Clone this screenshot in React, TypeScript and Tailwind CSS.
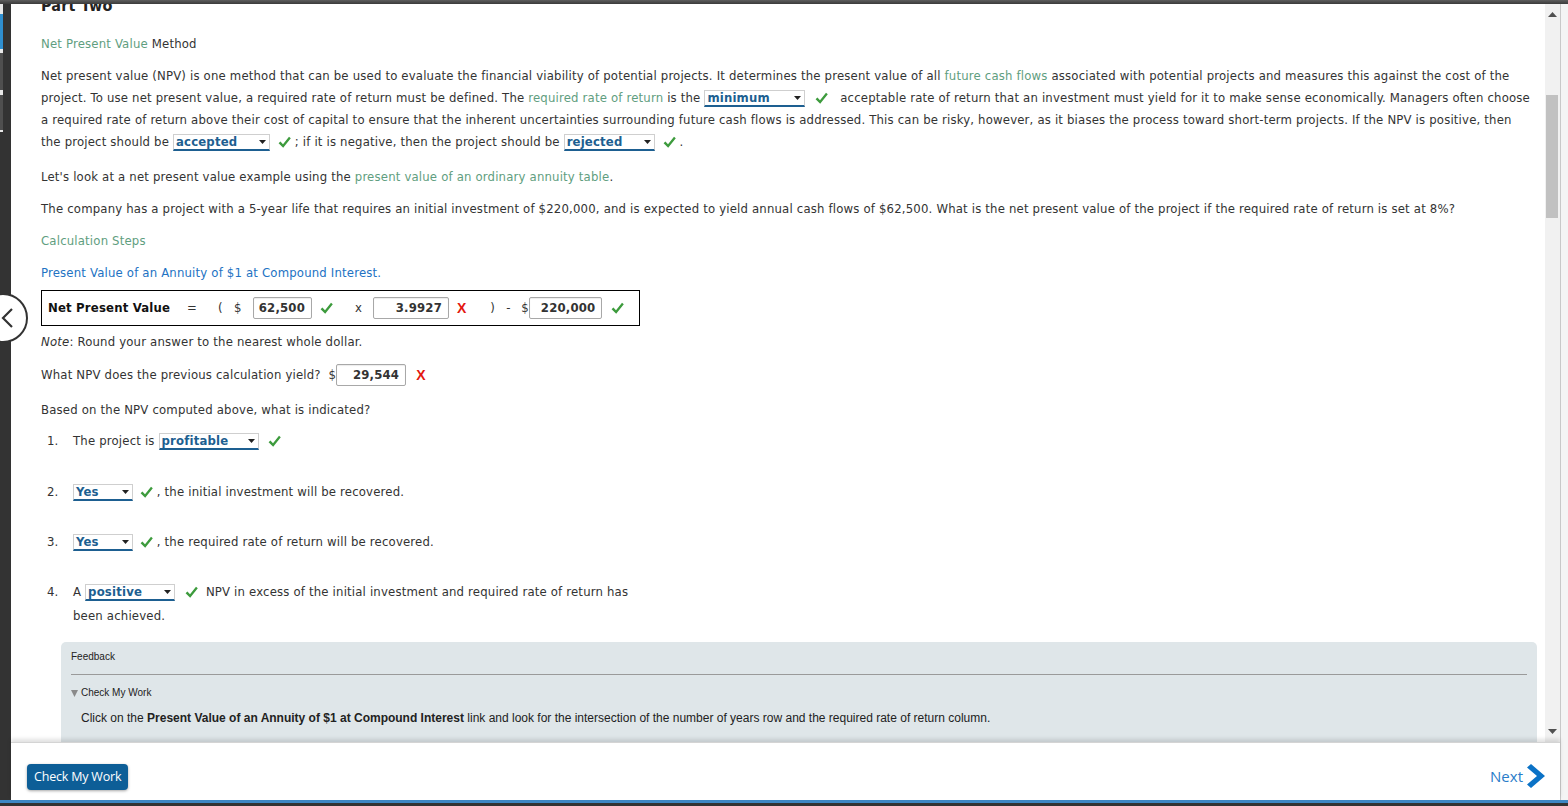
import React from "react";

const BODY_FONT = "font-['DejaVu_Sans_Condensed','DejaVu_Sans',sans-serif]";

function Arrow() {
  return (
    <svg width="7" height="4" viewBox="0 0 7 4" className="shrink-0">
      <path d="M0 0 H7 L3.5 4 Z" fill="#222" />
    </svg>
  );
}

function Select({ value, width }: { value: string; width: number }) {
  return (
    <span
      className="inline-flex h-[17px] items-center justify-between border border-[#cfcfcf] border-b-2 border-b-[#1d5f91] bg-white pl-[2px] pr-[3px] align-middle font-bold leading-[14px] text-[#1d5f91]"
      style={{ width }}
    >
      {value}
      <Arrow />
    </span>
  );
}

function Check({ className = "" }: { className?: string }) {
  return (
    <svg width="13" height="13" viewBox="0 0 13 13" className={`inline-block align-middle ${className}`}>
      <path d="M0.6 7.2 L2.4 5.6 L5 8.2 L11 0.8 L12.8 2.2 L5.2 11.8 Z" fill="#3d9b3d" />
    </svg>
  );
}

function Cross({ className = "" }: { className?: string }) {
  return (
    <span className={`inline-block align-middle font-['Liberation_Sans',sans-serif] text-[14px] font-bold leading-none tracking-normal text-[#e3170f] ${className}`}>
      X
    </span>
  );
}

function Field({ value, width }: { value: string; width: number }) {
  return (
    <span
      className="inline-flex h-[22px] items-center justify-end rounded-[2px] border border-[#a8a8a8] bg-white pr-[6px] align-middle font-bold text-[#333] shadow-[inset_0_1px_1px_rgba(0,0,0,0.08)]"
      style={{ width }}
    >
      {value}
    </span>
  );
}

function Green({ children }: { children: React.ReactNode }) {
  return <span className="text-[#5f9e80]">{children}</span>;
}

export default function App() {
  return (
    <div className="relative flex h-[806px] w-[1568px] flex-col overflow-hidden bg-white">
      {/* top strip */}
      <div className="h-[4px] shrink-0 bg-linear-to-b from-[#5e5e5e] to-[#3b3b3b]" />

      <div className="flex min-h-0 flex-1">
        {/* left rail */}
        <div className="flex w-[11px] shrink-0">
          <div className="flex w-[3px] flex-col bg-[#e8e8e8]">
            <div className="mt-[10px] h-[35px] bg-[#2f8fd0]" />
            <div className="mt-[4px] h-[37px] bg-[#4f4f4f]" />
            <div className="mt-[5px] h-[35px] bg-[#4f4f4f]" />
            <div className="mt-[2px] flex-1 bg-[#333]" />
          </div>
          <div className="flex-1 bg-[#333]" />
        </div>

        {/* main column */}
        <div className="flex min-w-0 flex-1 flex-col">
          <div className="flex min-h-0 flex-1">
            <div className={`min-w-0 flex-1 overflow-hidden pl-[30px] pr-[12px] text-[13px] tracking-[0.18px] text-[#333] ${BODY_FONT}`}>
              <h2 className="-mt-[8px] mb-[17px] text-[16px] font-bold leading-[20px] text-[#222]">Part Two</h2>

              <p className="mb-[10px] leading-[22px]">
                <Green>Net Present Value</Green> Method
              </p>

              <p className="mb-[13px] leading-[22px]">
                Net present value (NPV) is one method that can be used to evaluate the financial viability of potential projects. It
                determines the present value of all <Green>future cash flows</Green> associated with potential projects and measures this
                against the cost of the project. To use net present value, a required rate of return must be defined. The{" "}
                <Green>required rate of return</Green> is the <Select value="minimum" width={101} /> <Check className="ml-[6px] mr-[8px]" />{" "}
                acceptable rate of return that an investment must yield for it to make sense economically. Managers often choose a required
                rate of return above their cost of capital to ensure that the inherent uncertainties surrounding future cash flows is
                addressed. This can be risky, however, as it biases the process toward short-term projects. If the NPV is positive, then the
                project should be <Select value="accepted" width={97} /> <Check className="ml-[4px]" /> ; if it is negative, then the project
                should be <Select value="rejected" width={91} /> <Check className="ml-[4px]" /> .
              </p>

              <p className="mb-[10px] leading-[22px]">
                Let's look at a net present value example using the <Green>present value of an ordinary annuity table</Green>.
              </p>

              <p className="mb-[10px] leading-[22px]">
                The company has a project with a 5-year life that requires an initial investment of $220,000, and is expected to yield annual
                cash flows of $62,500. What is the net present value of the project if the required rate of return is set at 8%?
              </p>

              <p className="mb-[10px] leading-[22px]">
                <Green>Calculation Steps</Green>
              </p>

              <p className="mb-[6px] leading-[22px] text-[#2272c3]">Present Value of an Annuity of $1 at Compound Interest.</p>

              <div className="mb-[5px] flex h-[36px] w-[599px] items-center border border-black pl-[6px]">
                <span className="w-[139px] font-bold text-[#111]">Net Present Value</span>
                <span className="w-[31px]">=</span>
                <span className="w-[16px]">(</span>
                <span className="w-[19px]">$</span>
                <Field value="62,500" width={59} />
                <Check className="ml-[8px]" />
                <span className="ml-[22px] w-[18px]">x</span>
                <Field value="3.9927" width={76} />
                <Cross className="ml-[8px]" />
                <span className="ml-[24px] w-[16px]">)</span>
                <span className="w-[15px]">-</span>
                <span className="w-[8px]">$</span>
                <Field value="220,000" width={73} />
                <Check className="ml-[9px]" />
              </div>

              <p className="mb-[11px] leading-[22px]">
                <i>Note</i>: Round your answer to the nearest whole dollar.
              </p>

              <p className="mb-[13px] flex items-center leading-[22px]">
                What NPV does the previous calculation yield?&nbsp; $<Field value="29,544" width={70} />
                <Cross className="ml-[10px]" />
              </p>

              <p className="mb-[8px] leading-[22px]">Based on the NPV computed above, what is indicated?</p>

              <ol className="w-[620px]">
                <li className="mb-[27px] flex leading-[24px]">
                  <span className="w-[32px] shrink-0 pl-[6px]">1.</span>
                  <span>
                    The project is <Select value="profitable" width={100} /> <Check className="ml-[6px]" />
                  </span>
                </li>
                <li className="mb-[26px] flex leading-[24px]">
                  <span className="w-[32px] shrink-0 pl-[6px]">2.</span>
                  <span>
                    <Select value="Yes" width={60} /> <Check className="ml-[3px]" /> , the initial investment will be recovered.
                  </span>
                </li>
                <li className="mb-[26px] flex leading-[24px]">
                  <span className="w-[32px] shrink-0 pl-[6px]">3.</span>
                  <span>
                    <Select value="Yes" width={60} /> <Check className="ml-[3px]" /> , the required rate of return will be recovered.
                  </span>
                </li>
                <li className="mb-[14px] flex leading-[24px]">
                  <span className="w-[32px] shrink-0 pl-[6px]">4.</span>
                  <span className="w-[566px]">
                    A <Select value="positive" width={90} /> <Check className="ml-[6px] mr-[4px]" /> NPV in excess of the initial investment and
                    required rate of return has been achieved.
                  </span>
                </li>
              </ol>

              <div className="ml-[20px] mr-[-4px] rounded-t-[5px] bg-[#dfe6e9] px-[10px] pb-[24px] pt-[8px] font-['Liberation_Sans',sans-serif] tracking-normal text-[#222]">
                <div className="text-[10px] leading-[14px]">Feedback</div>
                <div className="mt-[10px] border-t border-[#9a9a9a]" />
                <div className="mt-[11px] flex items-center text-[10px] leading-[14px]">
                  <svg width="7" height="7" viewBox="0 0 7 7" className="mr-[3px]">
                    <path d="M0 0 H7 L3.5 7 Z" fill="#8a8a8a" />
                  </svg>
                  Check My Work
                </div>
                <p className="mt-[10px] pl-[10px] text-[12px] leading-[16px]">
                  Click on the <b>Present Value of an Annuity of $1 at Compound Interest</b> link and look for the intersection of the number of
                  years row and the required rate of return column.
                </p>
              </div>
            </div>

            {/* scrollbar */}
            <div className="relative w-[15px] shrink-0 bg-[#f1f1f1]">
              <svg width="9" height="5" viewBox="0 0 9 5" className="absolute left-[3px] top-[8px]">
                <path d="M0 5 L4.5 0 L9 5 Z" fill="#505050" />
              </svg>
              <div className="absolute left-[1px] top-[91px] h-[123px] w-[12px] bg-[#c1c1c1]" />
              <svg width="9" height="5" viewBox="0 0 9 5" className="absolute bottom-[8px] left-[3px]">
                <path d="M0 0 L9 0 L4.5 5 Z" fill="#505050" />
              </svg>
            </div>
          </div>

          {/* footer */}
          <div className="relative z-10 flex h-[58px] shrink-0 items-start justify-between border-t border-[#d4d4d4] bg-white pl-[16px] pr-[15px] pt-[21px] shadow-[0_-3px_4px_rgba(0,0,0,0.12)]">
            <button className="h-[26px] rounded-[4px] bg-[#0d5e97] px-[7px] font-['Open_Sans',sans-serif] text-[12.5px] tracking-[-0.2px] text-white shadow-[0_1px_3px_rgba(0,0,0,0.35)]">
              Check My Work
            </button>
            <div className="flex items-center gap-[4px] font-['Open_Sans',sans-serif] text-[15px] text-[#2a7cc9]">
              Next
              <svg width="18" height="24" viewBox="0 0 18 24">
                <path d="M4 0 L18 12 L4 24 L0 20.5 L10 12 L0 3.5 Z" fill="#0b72c6" />
              </svg>
            </div>
          </div>
        </div>

        {/* right edge */}
        <div className="w-[8px] shrink-0 border-l border-[#c8c8c8] bg-[#f4f4f4]" />
      </div>

      {/* bottom strip */}
      <div className="h-[3px] shrink-0 bg-[#3d87c4]" />
      <div className="h-[3px] shrink-0 bg-[#333]" />

      {/* back button */}
      <div className="absolute left-[-22px] top-[293px] flex h-[50px] w-[50px] items-center justify-end rounded-full border-2 border-[#333] bg-white pr-[12px]">
        <svg width="14" height="22" viewBox="0 0 14 22">
          <path d="M12 2 L3 11 L12 20" fill="none" stroke="#333" strokeWidth="2.2" />
        </svg>
      </div>
    </div>
  );
}
